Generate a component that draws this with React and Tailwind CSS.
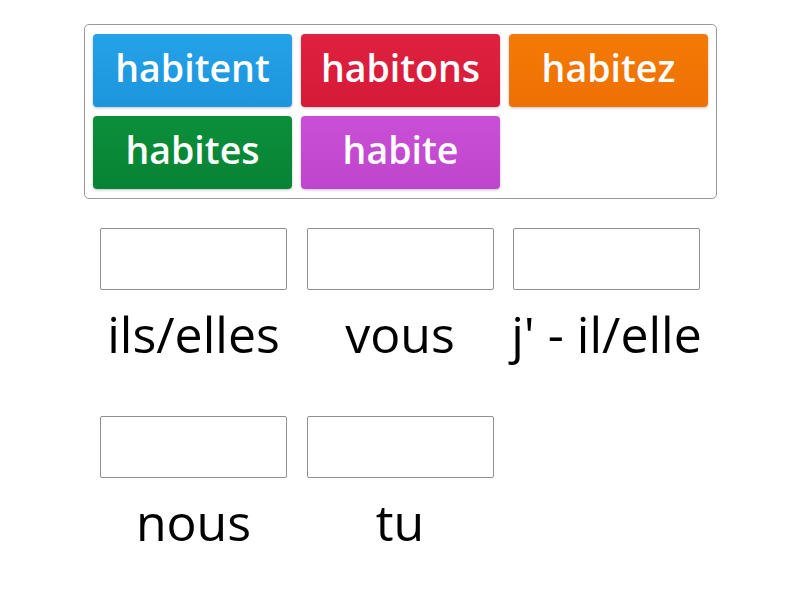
import React from "react";

const tiles = [
  { t: "habitent", c: "bg-[linear-gradient(180deg,#24a2e8_0%,#1c95dc_100%)]" },
  { t: "habitons", c: "bg-[linear-gradient(180deg,#e0213f_0%,#d41a38_100%)]" },
  { t: "habitez", c: "bg-[linear-gradient(180deg,#f47a06_0%,#ee7002_100%)]" },
  { t: "habites", c: "bg-[linear-gradient(180deg,#0b8f3a_0%,#078335_100%)]" },
  { t: "habite", c: "bg-[linear-gradient(180deg,#c94fd6_0%,#bf45ce_100%)]" },
];

const rows = [
  ["ils/elles", "vous", "j' - il/elle"],
  ["nous", "tu"],
];

export default function App() {
  return (
    <div
      className="w-[800px] h-[600px] bg-white overflow-hidden"
      style={{ fontFamily: '"Open Sans", sans-serif' }}
    >
      <div className="pt-[24px] pl-[84px]">
        <div className="w-[633px] h-[175px] border border-[#9a9a9a] rounded-[5px] px-[8px] py-[9px] grid grid-cols-[199px_199px_199px] auto-rows-[73px] gap-[9px]">
          {tiles.map((x) => (
            <div
              key={x.t}
              className={`${x.c} rounded-[4px] shadow-[0_1px_3px_rgba(0,0,0,0.25)] flex items-center justify-center text-white text-[37.5px] font-semibold leading-none`}
            >
              <span className="-mt-[5px]">{x.t}</span>
            </div>
          ))}
        </div>
      </div>
      <div className="pl-[100px] pt-[29px] flex flex-col">
        {rows.map((r, i) => (
          <div key={i} className="h-[188px] flex gap-[19.5px]">
            {r.map((l) => (
              <div key={l} className="w-[187px] flex flex-col items-center">
                <div className="w-[187px] h-[62px] border border-[#8f8f8f] rounded-[2px] bg-white" />
                <div className="mt-[14px] text-[50px] text-black whitespace-nowrap leading-[60px]">
                  {l}
                </div>
              </div>
            ))}
          </div>
        ))}
      </div>
    </div>
  );
}
